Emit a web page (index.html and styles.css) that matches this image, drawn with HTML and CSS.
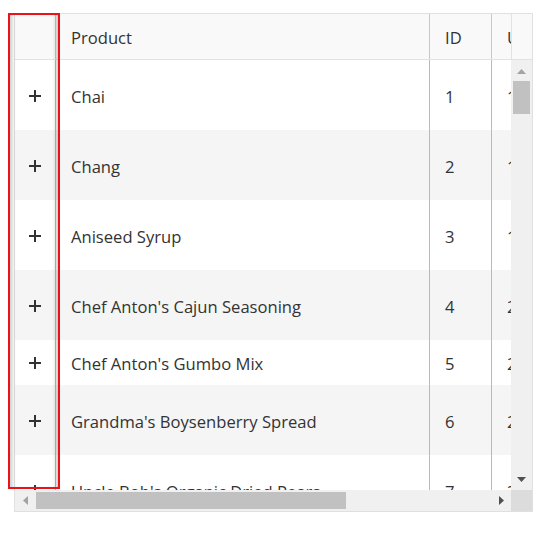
FILE: index.html
```html
<!DOCTYPE html>
<html>
<head>
<meta charset="utf-8">
<link rel="stylesheet" href="styles.css">
</head>
<body>
<div class="grid">
  <div class="header">
    <div class="cell exp"></div>
    <div class="cell product">Product</div>
    <div class="cell id">ID</div>
    <div class="cell price">UnitPrice</div>
    <div class="hfill"></div>
  </div>
  <div class="middle">
    <div class="viewport">
      <div class="row"><div class="cell exp"><span class="plus"></span></div><div class="cell product">Chai</div><div class="cell id">1</div><div class="cell price">18</div></div>
      <div class="row alt"><div class="cell exp"><span class="plus"></span></div><div class="cell product">Chang</div><div class="cell id">2</div><div class="cell price">19</div></div>
      <div class="row"><div class="cell exp"><span class="plus"></span></div><div class="cell product">Aniseed Syrup</div><div class="cell id">3</div><div class="cell price">10</div></div>
      <div class="row alt"><div class="cell exp"><span class="plus"></span></div><div class="cell product">Chef Anton's Cajun Seasoning</div><div class="cell id">4</div><div class="cell price">22</div></div>
      <div class="row short"><div class="cell exp"><span class="plus"></span></div><div class="cell product">Chef Anton's Gumbo Mix</div><div class="cell id">5</div><div class="cell price">21.35</div></div>
      <div class="row alt"><div class="cell exp"><span class="plus"></span></div><div class="cell product">Grandma's Boysenberry Spread</div><div class="cell id">6</div><div class="cell price">25</div></div>
      <div class="row"><div class="cell exp"><span class="plus"></span></div><div class="cell product">Uncle Bob's Organic Dried Pears</div><div class="cell id">7</div><div class="cell price">30</div></div>
    </div>
    <div class="vscroll">
      <svg class="arrow" width="9" height="5" viewBox="0 0 9 5"><polygon points="0,5 4.5,0 9,5" fill="#a3a3a3"/></svg>
      <div class="vthumb"></div>
      <div class="vspace"></div>
      <svg class="arrow" width="9" height="5" viewBox="0 0 9 5"><polygon points="0,0 9,0 4.5,5" fill="#505050"/></svg>
    </div>
  </div>
  <div class="bottom">
    <div class="hscroll">
      <svg class="harrow" width="5" height="9" viewBox="0 0 5 9"><polygon points="5,0 5,9 0,4.5" fill="#a3a3a3"/></svg>
      <div class="hthumb"></div>
      <div class="hspace"></div>
      <svg class="harrow" width="5" height="9" viewBox="0 0 5 9"><polygon points="0,0 5,4.5 0,9" fill="#505050"/></svg>
    </div>
    <div class="corner"></div>
  </div>
  <div class="frozen-outline"></div>
</div>
</body>
</html>
```
FILE: styles.css
```css
html, body {
  margin: 0;
  padding: 0;
  background: #fff;
}
body {
  padding: 13px 0 0 14px;
  font-family: "Open Sans", "Noto Sans", sans-serif;
  font-size: 16.6px;
  color: #333;
}
.grid {
  position: relative;
  width: 519px;
  height: 499px;
  box-sizing: border-box;
  border: 1px solid #e0e0e0;
  display: flex;
  flex-direction: column;
}
.header {
  display: flex;
  height: 46px;
  flex: none;
  box-sizing: border-box;
  border-bottom: 1px solid #e2e2e2;
  background: #f9f9f9;
  overflow: hidden;
}
.cell {
  flex: none;
  box-sizing: border-box;
  display: flex;
  align-items: center;
  padding-left: 15px;
  padding-top: 2px;
  white-space: nowrap;
  overflow: hidden;
  border-right: 1px solid #b9b9b9;
}
.header .cell {
  border-right-color: #c8c8c8;
}
.exp {
  width: 41px;
  padding-left: 0;
  justify-content: center;
}
.product { width: 374px; }
.id { width: 62px; }
.price { width: 20px; }
.header .price { border-right-color: #e2e2e2; }
.hfill {
  flex: 1;
}
.middle {
  flex: 1;
  display: flex;
  min-height: 0;
}
.viewport {
  width: 496px;
  overflow: hidden;
  flex: none;
}
.row {
  display: flex;
  height: 70px;
  background: #fff;
}
.row.alt { background: #f5f5f5; }
.row.short { height: 45px; }
.row .cell { height: 100%; }
.row .price { width: 40px; border-right: none; }
.plus {
  position: relative;
  width: 12px;
  height: 12px;
  margin-left: -1px;
  margin-top: -1px;
}
.plus::before, .plus::after {
  content: "";
  position: absolute;
  background: #333;
}
.plus::before { left: 0; top: 5px; width: 12px; height: 2px; }
.plus::after { left: 5px; top: 0; width: 2px; height: 12px; }
.vscroll {
  width: 21px;
  flex: none;
  background: #f0f0f0;
  display: flex;
  flex-direction: column;
  align-items: center;
}
.vscroll .arrow:first-child { margin-top: 9px; }
.vscroll .arrow:last-child { margin-bottom: 8px; }
.vthumb {
  width: 17px;
  height: 33px;
  margin-top: 7px;
  background: #c1c1c1;
}
.vspace { flex: 1; }
.bottom {
  height: 21px;
  flex: none;
  display: flex;
}
.hscroll {
  flex: 1;
  background: #f0f0f0;
  display: flex;
  align-items: center;
}
.harrow:first-child { margin-left: 8px; }
.harrow:last-child { margin-right: 7px; }
.hthumb {
  width: 310px;
  height: 17px;
  margin-left: 8px;
  background: #c1c1c1;
}
.hspace { flex: 1; }
.corner {
  width: 21px;
  background: #dcdcdc;
}
.frozen-outline {
  position: absolute;
  left: -7px;
  top: -1px;
  width: 52px;
  height: 476px;
  box-sizing: border-box;
  border: 2px solid #e8141a;
  box-shadow: inset 5px 0 4px -3px rgba(0,0,0,0.22), inset -5px 0 4px -3px rgba(0,0,0,0.22);
  pointer-events: none;
}
```
